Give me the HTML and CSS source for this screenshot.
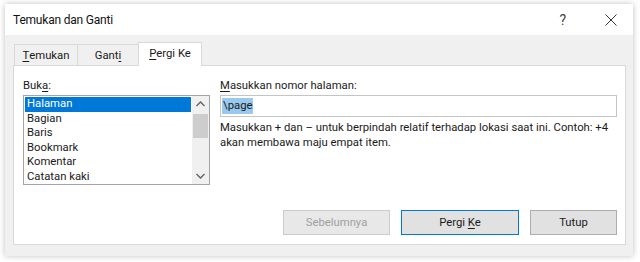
FILE: index.html
```html
<!DOCTYPE html>
<html lang="id">
<head>
    <meta charset="UTF-8">
    <title>Temukan dan Ganti</title>
    <link rel="stylesheet" href="styles.css">
</head>
<body>
    <div class="window">
        <div class="titlebar">
            <span class="title">Temukan dan Ganti</span>
            <span class="help">?</span>
            <svg class="close" width="12" height="12" viewBox="0 0 12 12">
                <path d="M0.5 0.5 L11.5 11.5 M11.5 0.5 L0.5 11.5" stroke="#333" stroke-width="1" fill="none"/>
            </svg>
        </div>
        <div class="content">
            <div class="tabs">
                <div class="tab tab-1"><u>T</u>emukan</div>
                <div class="tab tab-2">Gant<u>i</u></div>
                <div class="tab tab-3 active"><u>P</u>ergi Ke</div>
            </div>
            <div class="panel">
                <div class="fields">
                    <div class="left">
                        <div class="label">Buk<u>a</u>:</div>
                        <div class="listbox">
                            <ul class="items">
                                <li class="selected">Halaman</li>
                                <li>Bagian</li>
                                <li>Baris</li>
                                <li>Bookmark</li>
                                <li>Komentar</li>
                                <li>Catatan kaki</li>
                            </ul>
                            <div class="scrollbar">
                                <svg class="arrow" width="17" height="16" viewBox="0 0 17 16">
                                    <path d="M4.5 10 L8.5 6 L12.5 10" stroke="#606060" stroke-width="1.3" fill="none"/>
                                </svg>
                                <div class="thumb"></div>
                                <div class="track"></div>
                                <svg class="arrow" width="17" height="16" viewBox="0 0 17 16">
                                    <path d="M4.5 6 L8.5 10 L12.5 6" stroke="#606060" stroke-width="1.3" fill="none"/>
                                </svg>
                            </div>
                        </div>
                    </div>
                    <div class="right">
                        <div class="label"><u>M</u>asukkan nomor halaman:</div>
                        <div class="textbox"><span class="sel">\page</span></div>
                        <p class="hint">Masukkan + dan – untuk berpindah relatif terhadap lokasi saat ini. Contoh: +4 akan membawa maju empat item.</p>
                    </div>
                </div>
                <div class="buttons">
                    <button class="btn btn-prev" disabled>Sebelumnya</button>
                    <button class="btn btn-go">Pergi <u>K</u>e</button>
                    <button class="btn btn-close">Tutup</button>
                </div>
            </div>
        </div>
    </div>
</body>
</html>
```
FILE: styles.css
```css
body {
  margin: 0;
  padding: 4px 7px 6px 5px;
  background: #ffffff;
  font-family: Roboto, "Noto Sans", sans-serif;
  font-size: 11.3px;
  color: #1a1a1a;
}

u {
  text-decoration: underline;
  text-underline-offset: 2px;
}

.window {
  width: 628px;
  height: 252px;
  display: flex;
  flex-direction: column;
  background: #f0f0f0;
  box-shadow: 0 0 6px rgba(0, 0, 0, 0.25);
}

.titlebar {
  height: 31px;
  flex: none;
  display: flex;
  align-items: center;
  background: #ffffff;
  padding-left: 8px;
}

.title {
  font-size: 12px;
  letter-spacing: -0.2px;
  color: #111;
  flex: 1;
}

.help {
  font-size: 14px;
  color: #444;
  margin-right: 39px;
}

.close {
  margin-right: 16px;
}

.content {
  flex: 1;
  display: flex;
  flex-direction: column;
  padding: 7px 7px 11px 8px;
}

.tabs {
  display: flex;
  align-items: flex-end;
  height: 23px;
  padding-left: 1px;
  position: relative;
  z-index: 1;
}

.tab {
  height: 21px;
  box-sizing: border-box;
  border: 1px solid #d9d9d9;
  border-bottom: none;
  background: #f0f0f0;
  display: flex;
  align-items: center;
  justify-content: center;
  padding-top: 1px;
}

.tab-1 { width: 64px; }
.tab-2 { width: 61px; border-left: none; }
.tab-3 { width: 64px; border-left: none; }

.tab.active {
  height: 24px;
  margin-bottom: -1px;
  background: #ffffff;
  border-left: 1px solid #d9d9d9;
  margin-left: -1px;
  padding-top: 0;
  padding-bottom: 2px;
}

.panel {
  flex: 1;
  display: flex;
  flex-direction: column;
  background: #ffffff;
  border: 1px solid #d9d9d9;
  padding: 11px 8px 9px 9px;
}

.fields {
  display: flex;
  gap: 10px;
}

.label {
  height: 18px;
  line-height: 17px;
}

.left {
  width: 187px;
}

.listbox {
  display: flex;
  height: 90px;
  box-sizing: border-box;
  border: 1px solid #a5a5a5;
}

.items {
  flex: 1;
  list-style: none;
  margin: 0;
  padding: 1px 1px 0 1px;
}

.items li {
  height: 14.5px;
  line-height: 14px;
  padding-left: 2px;
  white-space: nowrap;
}

.items li.selected {
  background: #0078d7;
  color: #ffffff;
}

.scrollbar {
  width: 17px;
  background: #f0f0f0;
  display: flex;
  flex-direction: column;
}

.arrow {
  flex: none;
  display: block;
}

.thumb {
  height: 24px;
  margin: 2px 1px 0 1px;
  background: #cdcdcd;
  flex: none;
}

.track {
  flex: 1;
}

.right {
  flex: 1;
}

.textbox {
  height: 22px;
  box-sizing: border-box;
  border: 1px solid #c4c4c4;
  display: flex;
  align-items: center;
  padding-left: 1px;
}

.sel {
  background: #99c9ef;
  line-height: 16px;
  padding: 0 1px;
}

.hint {
  margin: 3px 0 0 0;
  line-height: 15px;
  padding-right: 8px;
}

.buttons {
  margin-top: auto;
  display: flex;
  justify-content: flex-end;
  gap: 11px;
}

.btn {
  height: 25px;
  font-family: inherit;
  font-size: 11.3px;
  color: #1a1a1a;
  background: #e1e1e1;
  border: 1px solid #adadad;
  padding: 0;
}

.btn-prev {
  width: 107px;
  color: #a0a0a0;
  background: #e8e8e8;
  border-color: #cccccc;
}

.btn-go {
  width: 118px;
  border-color: #0078d7;
}

.btn-close {
  width: 87px;
}
```
